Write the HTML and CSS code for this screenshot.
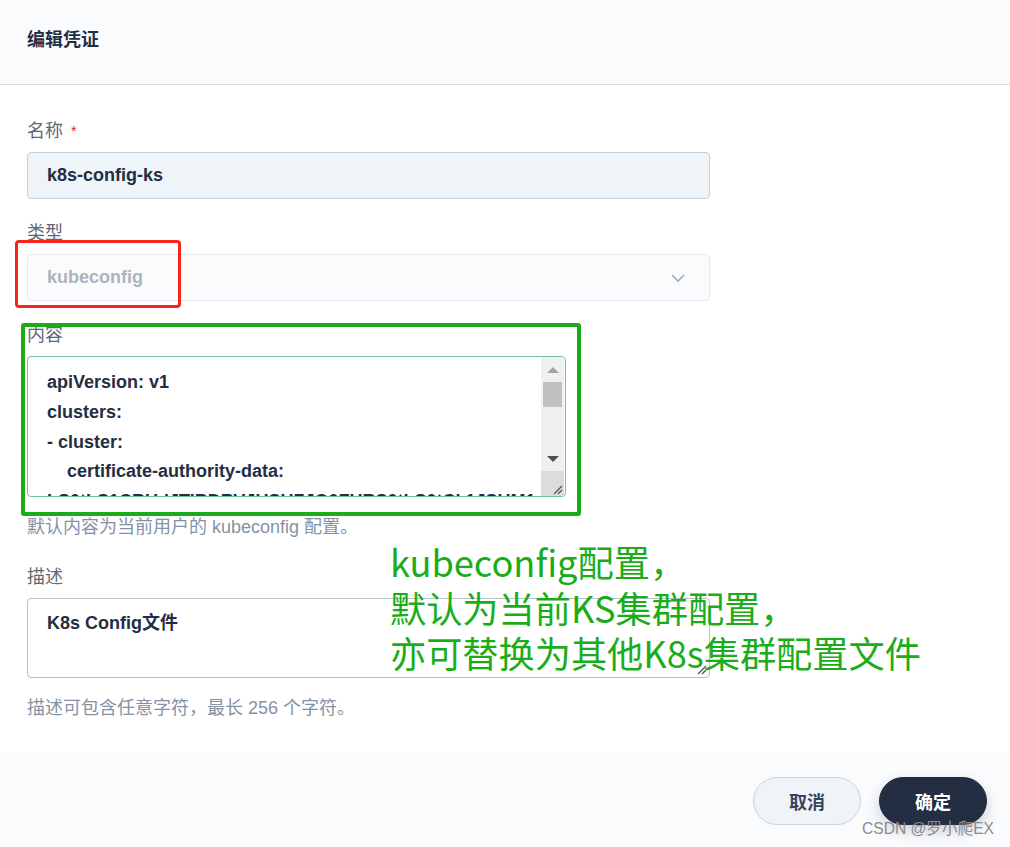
FILE: index.html
```html
<!DOCTYPE html>
<html lang="zh-CN">
<head>
<meta charset="utf-8">
<title>编辑凭证</title>
<link rel="stylesheet" href="styles.css">
</head>
<body>
<div class="modal">
  <header class="head">
    <h1 class="title">编辑凭证</h1>
  </header>

  <main class="form">
    <div class="field">
      <div class="label">名称 <span class="req">*</span></div>
      <div class="input">k8s-config-ks</div>
    </div>

    <div class="field">
      <div class="label">类型</div>
      <div class="select">
        <span class="select-text">kubeconfig</span>
        <svg class="chevron" width="16" height="10" viewBox="0 0 16 10"><path d="M2 2 L8 8 L14 2" fill="none" stroke="#a3adb8" stroke-width="1.6"/></svg>
      </div>
    </div>

    <div class="field field-content">
      <div class="label">内容</div>
      <div class="code">
        <div class="code-lines">
          <div class="line">apiVersion: v1</div>
          <div class="line">clusters:</div>
          <div class="line">- cluster:</div>
          <div class="line indent">certificate-authority-data:</div>
          <div class="line">LS0tLS1CRUdJTiBDRVJUSUZJQ0FURS0tLS0tCk1JSUM1ekNDQWMr</div>
        </div>
        <div class="scrollbar">
          <div class="sb-btn"><span class="tri-up"></span></div>
          <div class="sb-track"><div class="sb-thumb"></div></div>
          <div class="sb-btn"><span class="tri-down"></span></div>
          <div class="sb-corner">
            <svg width="12" height="12" viewBox="0 0 12 12"><path d="M11 3 L3 11 M11 7 L7 11" stroke="#555" stroke-width="1.3"/></svg>
          </div>
        </div>
      </div>
      <div class="help">默认内容为当前用户的 kubeconfig 配置。</div>
    </div>

    <div class="field">
      <div class="label">描述</div>
      <div class="textarea">
        <span>K8s Config文件</span>
        <svg class="grip" width="12" height="12" viewBox="0 0 12 12"><path d="M11 3 L3 11 M11 7 L7 11" stroke="#555" stroke-width="1.3"/></svg>
      </div>
      <div class="help">描述可包含任意字符，最长 256 个字符。</div>
    </div>
  </main>

  <footer class="foot">
    <button class="btn btn-cancel">取消</button>
    <button class="btn btn-ok">确定</button>
  </footer>

  <div class="anno-red"></div>
  <div class="anno-green"></div>
  <div class="anno-text">kubeconfig配置，<br>默认为当前KS集群配置，<br>亦可替换为其他K8s集群配置文件</div>
  <div class="watermark">CSDN @罗小爬EX</div>
</div>
</body>
</html>
```

FILE: styles.css
```css
* { box-sizing: border-box; }

html, body {
  margin: 0;
  padding: 0;
  background: #ffffff;
}

body {
  font-family: "Liberation Sans", "Noto Sans CJK SC", sans-serif;
  font-size: 18px;
  color: #242e42;
}

.modal {
  position: relative;
  width: 1010px;
  height: 847px;
  overflow: hidden;
  display: flex;
  flex-direction: column;
}

.head {
  height: 85px;
  background: #f9fbfd;
  border-bottom: 1px solid #d5dbe2;
  display: flex;
  align-items: center;
  padding: 0 0 5px 27px;
}

.title {
  margin: 0;
  font-size: 18px;
  font-weight: 700;
  color: #242e42;
  line-height: 24px;
}

.form {
  padding: 36px 300px 35px 27px;
  display: flex;
  flex-direction: column;
}

.field {
  display: flex;
  flex-direction: column;
  margin-bottom: 24px;
}

.field:last-child { margin-bottom: 0; }

.field-content { margin-bottom: 30px; }

.label {
  line-height: 20px;
  height: 20px;
  font-size: 18px;
  color: #5d6877;
  margin-bottom: 11px;
}

.req {
  color: #ca2621;
  font-size: 14px;
  vertical-align: top;
  margin-left: 3px;
}

.input {
  height: 47px;
  border: 1px solid #c7cfd8;
  border-radius: 4px;
  background: #eff4f9;
  padding: 0 19px;
  display: flex;
  align-items: center;
  font-weight: 700;
  color: #242e42;
}

.select {
  height: 47px;
  border: 1px solid #e3e9ef;
  border-radius: 4px;
  background: #f9fbfd;
  padding: 0 23px 0 19px;
  display: flex;
  align-items: center;
  justify-content: space-between;
}

.select-text {
  font-weight: 700;
  color: #abb4be;
}

.code {
  width: 539px;
  height: 141px;
  border: 1px solid #6cc497;
  border-radius: 4px;
  background: #fff;
  display: flex;
  overflow: hidden;
}

.code-lines {
  flex: 1;
  padding: 11px 0 0 19px;
  overflow: hidden;
  white-space: nowrap;
}

.line {
  height: 29.8px;
  line-height: 29.8px;
  font-weight: 700;
  color: #242e42;
}

.indent { padding-left: 20px; }

.scrollbar {
  width: 23px;
  margin-right: 1px;
  background: #f0f0f0;
  display: flex;
  flex-direction: column;
}

.sb-btn {
  height: 25px;
  display: flex;
  align-items: center;
  justify-content: center;
}

.tri-up {
  width: 0; height: 0;
  border-left: 6px solid transparent;
  border-right: 6px solid transparent;
  border-bottom: 6px solid #a3a3a3;
}

.tri-down {
  width: 0; height: 0;
  border-left: 6px solid transparent;
  border-right: 6px solid transparent;
  border-top: 6px solid #505050;
}

.sb-track {
  flex: 1;
  padding: 0 2px;
}

.sb-thumb {
  height: 25px;
  background: #c1c1c1;
}

.sb-corner {
  height: 25px;
  background: #dcdcdc;
  display: flex;
  align-items: flex-end;
  justify-content: flex-end;
  padding: 0 1px 1px 0;
}

.help {
  margin-top: 20px;
  line-height: 20px;
  height: 20px;
  font-size: 18px;
  color: #8592a5;
}

.textarea {
  position: relative;
  height: 80px;
  border: 1px solid #b7c0cb;
  border-radius: 4px;
  background: #fff;
  padding: 12px 19px;
  font-weight: 700;
  line-height: 24px;
  color: #242e42;
}

.grip {
  position: absolute;
  right: 2px;
  bottom: 2px;
}

.foot {
  flex: 1;
  background: #f9fbfd;
  display: flex;
  justify-content: flex-end;
  align-items: flex-start;
  gap: 18px;
  padding: 24px 23px 0 0;
}

.btn {
  width: 108px;
  height: 48px;
  border-radius: 24px;
  font-family: "Liberation Sans", "Noto Sans CJK SC", sans-serif;
  font-size: 18px;
  font-weight: 700;
  cursor: pointer;
}

.btn-cancel {
  background: #eff4f9;
  border: 1px solid #ccd3db;
  color: #36435c;
}

.btn-ok {
  background: #242e42;
  border: 1px solid #242e42;
  color: #ffffff;
  box-shadow: 0 6px 14px rgba(36, 46, 66, 0.2);
}

/* screenshot annotations */
.anno-red {
  position: absolute;
  left: 15px;
  top: 240px;
  width: 166px;
  height: 68px;
  border: 3px solid #fb2418;
  border-radius: 4px;
}

.anno-green {
  position: absolute;
  left: 21px;
  top: 323px;
  width: 560px;
  height: 193px;
  border: 4px solid #1aad19;
  border-radius: 3px;
}

.anno-text {
  position: absolute;
  left: 390px;
  top: 539px;
  font-family: "Noto Sans CJK SC", sans-serif;
  font-size: 36.2px;
  line-height: 45.5px;
  color: #1aad19;
  white-space: nowrap;
}

.watermark {
  position: absolute;
  left: 862px;
  top: 819px;
  font-family: "Liberation Sans", "Noto Sans CJK SC", sans-serif;
  font-size: 15.6px;
  line-height: 20px;
  color: #8c8c8c;
}
```
